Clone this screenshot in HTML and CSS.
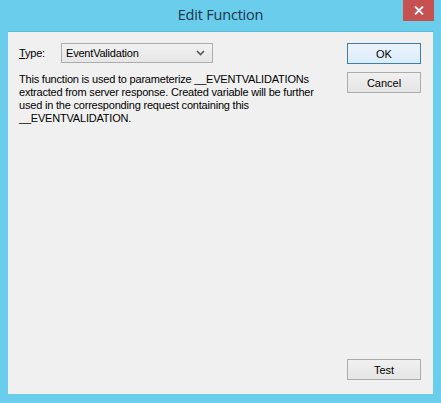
FILE: index.html
```html
<!DOCTYPE html>
<html>
<head>
<meta charset="utf-8">
<link rel="stylesheet" href="styles.css">
</head>
<body>
<div class="window">
  <div class="titlebar">
    <span class="title">Edit Function</span>
    <button class="close" aria-label="Close">
      <svg width="10" height="9" viewBox="0 0 10 9"><path d="M1 0.5 L9 8.5 M9 0.5 L1 8.5" stroke="#fff" stroke-width="1.8"/></svg>
    </button>
  </div>
  <div class="client">
    <div class="main">
      <div class="row">
        <label class="label"><u>T</u>ype:</label>
        <div class="select">
          <span>EventValidation</span>
          <svg class="chev" width="9" height="6" viewBox="0 0 9 6"><path d="M1 1 L4.5 4.5 L8 1" fill="none" stroke="#555" stroke-width="1.6"/></svg>
        </div>
      </div>
      <p class="desc">This function is used to parameterize __EVENTVALIDATIONs<br>extracted from server response. Created variable will be further<br>used in the corresponding request containing this<br>__EVENTVALIDATION.</p>
    </div>
    <div class="side">
      <button class="btn default">OK</button>
      <button class="btn">Cancel</button>
      <div class="spacer"></div>
      <button class="btn">Test</button>
    </div>
  </div>
</div>
</body>
</html>
```
FILE: styles.css
```css
html, body {
  margin: 0;
  padding: 0;
}
body {
  width: 441px;
  height: 403px;
  background: #6bcdec;
  font-family: "Liberation Sans", sans-serif;
  overflow: hidden;
}
.window {
  display: flex;
  flex-direction: column;
  height: 403px;
}
.titlebar {
  position: relative;
  height: 31px;
  display: flex;
  justify-content: center;
  align-items: flex-start;
}
.title {
  margin-top: 5px;
  font-family: "Open Sans", "Noto Sans", sans-serif;
  font-size: 14.5px;
  color: #17364a;
  letter-spacing: -0.2px;
}
.close {
  position: absolute;
  top: 0;
  left: 403px;
  width: 31px;
  height: 21px;
  border: 0;
  padding: 0;
  background: #c75050;
  display: flex;
  align-items: center;
  justify-content: center;
}
.client {
  margin: 0 8px;
  height: 363px;
  background: #f0f0f0;
  border-top: 1px solid #5cb9d9;
  display: flex;
  box-sizing: border-box;
  padding: 11px 12px 14px 11px;
}
.main {
  flex: 1;
  font-size: 11px;
  letter-spacing: -0.2px;
  color: #000;
}
.row {
  display: flex;
  align-items: center;
  height: 20px;
}
.label {
  width: 42px;
}
.select {
  width: 152px;
  height: 20px;
  box-sizing: border-box;
  border: 1px solid #acacac;
  background: linear-gradient(#f2f2f2, #e6e6e6);
  display: flex;
  align-items: center;
  padding: 0 7px 0 4px;
  justify-content: space-between;
}
.desc {
  margin: 10px 0 0;
  line-height: 13px;
  white-space: nowrap;
}
.side {
  width: 74px;
  display: flex;
  flex-direction: column;
  gap: 8px;
}
.spacer {
  flex: 1;
}
.btn {
  width: 74px;
  height: 21px;
  box-sizing: border-box;
  border: 1px solid #acacac;
  background: linear-gradient(#f0f0f0, #e5e5e5);
  font-family: "Liberation Sans", sans-serif;
  font-size: 11px;
  color: #000;
  padding: 0;
}
.btn.default {
  border-color: #3c7fb1;
  background: linear-gradient(#ecf4fc, #dcecfc);
}
```
